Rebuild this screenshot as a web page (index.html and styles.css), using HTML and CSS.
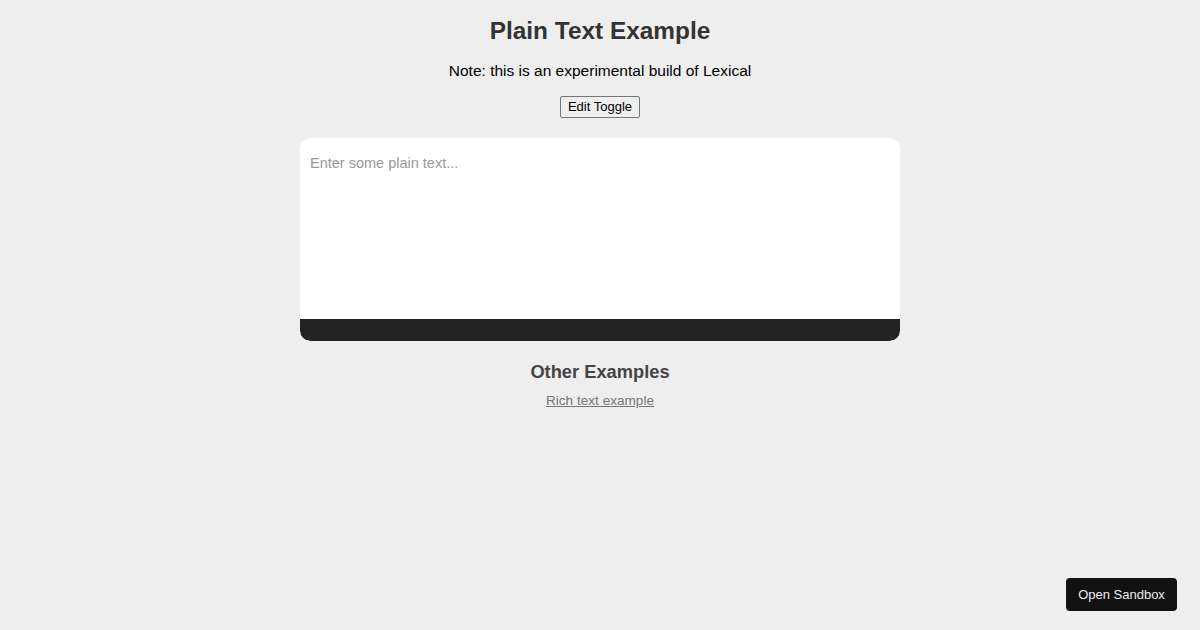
FILE: index.html
```html
<!DOCTYPE html>
<html>
<head>
<meta charset="utf-8">
<link rel="stylesheet" href="styles.css">
</head>
<body>
<main class="app">
  <h1 class="title">Plain Text Example</h1>
  <p class="note">Note: this is an experimental build of Lexical</p>
  <button class="toggle" type="button">Edit Toggle</button>
  <div class="editor-shell">
    <div class="editor-input">
      <div class="placeholder">Enter some plain text...</div>
    </div>
    <div class="editor-bar"></div>
  </div>
  <h2 class="other">Other Examples</h2>
  <a class="link" href="#">Rich text example</a>
</main>
<a class="sandbox" href="#">Open Sandbox</a>
</body>
</html>
```
FILE: styles.css
```css
html, body {
  margin: 0;
  padding: 0;
  background: #eeeeee;
  font-family: "Liberation Sans", Arial, sans-serif;
}
.app {
  display: flex;
  flex-direction: column;
  align-items: center;
  padding-top: 16px;
}
.title {
  margin: 0;
  font-size: 24.4px;
  line-height: 30px;
  font-weight: 700;
  color: #333333;
}
.note {
  margin: 15px 0 0;
  font-size: 15.5px;
  line-height: 20px;
  color: #000000;
}
.toggle {
  margin-top: 15px;
  font-family: "Liberation Sans", Arial, sans-serif;
  font-size: 13px;
  line-height: 16px;
  padding: 1px 7px;
  height: 22px;
  background: #efefef;
  border: 1px solid #767676;
  border-radius: 2px;
  color: #000;
}
.editor-shell {
  margin-top: 20px;
  width: 600px;
  background: #ffffff;
  border-radius: 10px;
  overflow: hidden;
}
.editor-input {
  height: 181px;
  padding: 15px 10px 0;
  box-sizing: border-box;
}
.placeholder {
  font-size: 14.5px;
  line-height: 20px;
  color: #999999;
}
.editor-bar {
  height: 22px;
  background: #222222;
  border-radius: 0 0 10px 10px;
}
.other {
  margin: 20px 0 0;
  font-size: 18.3px;
  line-height: 22px;
  font-weight: 700;
  color: #444444;
}
.link {
  margin-top: 9px;
  font-size: 13.6px;
  line-height: 18px;
  color: #777777;
  text-decoration: underline;
}
.sandbox {
  position: fixed;
  right: 23px;
  bottom: 19px;
  width: 111px;
  height: 33px;
  box-sizing: border-box;
  display: flex;
  align-items: center;
  justify-content: center;
  background: #111111;
  color: #eeeeee;
  font-size: 13px;
  border-radius: 4px;
  text-decoration: none;
}
```
